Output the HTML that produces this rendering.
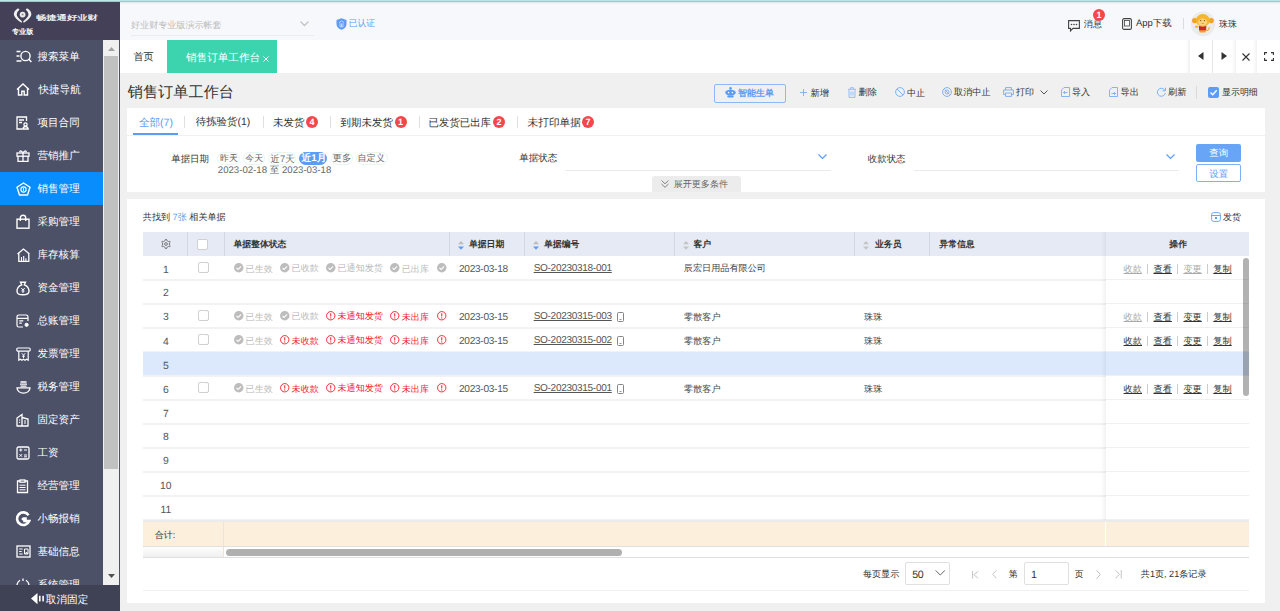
<!DOCTYPE html><html><head><meta charset="utf-8"><style>
*{margin:0;padding:0;box-sizing:border-box}
html,body{width:1280px;height:611px;overflow:hidden;background:#f0f0f0;font-family:"Liberation Sans",sans-serif;color:#333;text-rendering:geometricPrecision}
.a{position:absolute;white-space:nowrap;line-height:1}
svg{position:absolute;overflow:visible}
.b{position:absolute}
#topline{position:absolute;left:0;top:0;width:1280px;height:2px;background:linear-gradient(#b9e4e8 0,#b9e4e8 50%,#a3c6c8 50%)}
#side{position:absolute;left:0;top:0;width:120px;height:611px;background:#4d5168}
#logo{position:absolute;left:0;top:2px;width:120px;height:38px;background:#434057}
.mi{position:absolute;left:0;width:103px;height:33px}
.mi svg{left:16px;top:10px}
.mi.on{background:#098dfd}
#sscroll{position:absolute;left:103px;top:40px;width:16px;height:545px;background:#f0f0f0}
#sbottom{position:absolute;left:0;top:585px;width:120px;height:26px;background:#3f4254}
#header{position:absolute;left:120px;top:2px;width:1160px;height:38px;background:linear-gradient(rgba(0,0,0,0.07),rgba(0,0,0,0) 2.5px),#f7f8fc}
#tabbar{position:absolute;left:120px;top:40px;width:1160px;height:33px;background:#fff}
.card{position:absolute;background:#fff}
.badge{position:absolute;width:12px;height:12px;border-radius:6px;background:#f4474b;color:#fff;font-size:9px;font-weight:bold;text-align:center;line-height:12px}
.chip{position:absolute;top:151.5px;height:13px;border:1px solid #e8f5f1;border-radius:7px}
.th{position:absolute;top:232px;height:24px;background:#e6eaf5}
.hs{position:absolute;top:232px;width:1px;height:24px;background:#d3d7e0}
.row{position:absolute;left:143px;width:1106px;height:2px;background:#f2f2f2}
.cb{position:absolute;width:11px;height:11px;border:1px solid #d0d0d0;border-radius:2px;background:#fff}
.link{text-decoration:underline;text-underline-offset:1px}
</style></head><body>
<div id="side"></div><div id="logo"></div>
<svg style="left:10px;top:5px" width="26" height="21" viewBox="0 0 26 21"><path d="M7.6 3.6Q8.9 3.4 9.5 4.6Q6.6 7.2 6.7 9.6Q6.9 12.3 11.9 16.3Q12.2 17.2 11.4 17.7Q4.9 13.6 3.9 10Q3.4 6.6 7.6 3.6z" fill="#f0f0f0"/><path d="M17.6 3.6Q16.3 3.4 15.7 4.6Q18.6 7.2 18.5 9.6Q18.3 12.3 13.3 16.3Q13 17.2 13.8 17.7Q20.3 13.6 21.3 10Q21.8 6.6 17.6 3.6z" fill="#f0f0f0"/><circle cx="12.6" cy="9.6" r="2.9" fill="#ececec"/><circle cx="12.6" cy="9.6" r="1" fill="#8a8a95"/></svg>
<div class="a" style="left:35.9px;top:13.7px;font-size:10.35px;color:#eeeeee;font-weight:bold;transform:scaleY(0.68);transform-origin:0 50%">畅捷通好业财</div>
<div class="a" style="left:12.0px;top:29.0px;font-size:7.1px;color:#fff;font-weight:bold;">专业版</div>
<div class="mi" style="top:40px"><svg width="16" height="13" viewBox="0 0 16 13" fill="none" stroke="#fff" stroke-width="1.4"><path d="M0.5 1.5h4M0.5 6h3M0.5 11h5"/><circle cx="9.5" cy="6" r="4.6"/><path d="M12.8 9.3l2.6 2.8"/></svg></div>
<div class="a" style="left:37.5px;top:52.1px;font-size:10.55px;color:#fff;font-weight:400;">搜索菜单</div>
<div class="mi" style="top:73px"><svg width="14" height="13" viewBox="0 0 14 13" fill="none" stroke="#fff" stroke-width="1.4"><path d="M1 6.5L7 1l6 5.5M2.5 5.3V12h3.3V8.2h2.4V12h3.3V5.3"/></svg></div>
<div class="a" style="left:38.5px;top:85.1px;font-size:10.55px;color:#fff;font-weight:400;">快捷导航</div>
<div class="mi" style="top:106px"><svg width="13" height="14" viewBox="0 0 13 14" fill="none" stroke="#fff" stroke-width="1.3"><path d="M10.5 5V1H1v12h5"/><path d="M3 4h5M3 6.5h3"/><circle cx="9.5" cy="8.5" r="1.6"/><path d="M6.8 13c.4-1.6 1.5-2.5 2.7-2.5s2.3.9 2.7 2.5z"/></svg></div>
<div class="a" style="left:37.5px;top:118.1px;font-size:10.55px;color:#fff;font-weight:400;">项目合同</div>
<div class="mi" style="top:139px"><svg width="14" height="13" viewBox="0 0 14 13" fill="none" stroke="#fff" stroke-width="1.3"><rect x="1" y="4" width="12" height="3.2"/><path d="M2 7.2V12.3h10V7.2M7 4v8.3"/><path d="M7 4C5.5 1 3.2 1.5 4 3.2M7 4c1.5-3 3.8-2.5 3 -.8"/></svg></div>
<div class="a" style="left:37.5px;top:151.1px;font-size:10.55px;color:#fff;font-weight:400;">营销推广</div>
<div class="mi on" style="top:172px"><svg width="15" height="14" viewBox="0 0 15 14" fill="none" stroke="#fff" stroke-width="1.4"><path d="M7.5 1L14 5.2 11.5 13h-8L1 5.2z"/><circle cx="7.5" cy="7.5" r="2.6" stroke-width="1.1"/><path d="M7.5 6v3" stroke-width="0.9"/></svg></div>
<div class="a" style="left:37.5px;top:184.1px;font-size:10.55px;color:#fff;font-weight:400;">销售管理</div>
<div class="mi" style="top:205px"><svg width="14" height="14" viewBox="0 0 14 14" fill="none" stroke="#fff" stroke-width="1.4"><rect x="1" y="4.2" width="12" height="9"/><path d="M4.3 6V3a2.7 2.7 0 0 1 5.4 0v3"/></svg></div>
<div class="a" style="left:37.5px;top:217.1px;font-size:10.55px;color:#fff;font-weight:400;">采购管理</div>
<div class="mi" style="top:238px"><svg width="15" height="14" viewBox="0 0 15 14" fill="none" stroke="#fff" stroke-width="1.3"><path d="M1.5 6L7.5 1l6 5M2.8 5v8.3h10V5"/><path d="M5.5 13V9M7.7 13V8M9.9 13V10.3" stroke-width="1.1"/></svg></div>
<div class="a" style="left:37.5px;top:250.1px;font-size:10.55px;color:#fff;font-weight:400;">库存核算</div>
<div class="mi" style="top:271px"><svg width="14" height="15" viewBox="0 0 14 15" fill="none" stroke="#fff" stroke-width="1.4"><path d="M4.5 1.2h5L8.3 3.8c3 1 4.7 3.6 4.7 6.5 0 2.6-1.8 3.5-6 3.5s-6-.9-6-3.5c0-2.9 1.7-5.5 4.7-6.5z"/><path d="M5.3 7l1.7 2 1.7-2M7 9v3M5.5 10h3" stroke-width="1"/></svg></div>
<div class="a" style="left:37.5px;top:283.1px;font-size:10.55px;color:#fff;font-weight:400;">资金管理</div>
<div class="mi" style="top:304px"><svg width="14" height="14" viewBox="0 0 14 14" fill="none" stroke="#fff" stroke-width="1.2"><path d="M12 7V2.8A1.8 1.8 0 0 0 10.2 1H2.8A1.8 1.8 0 0 0 1 2.8v8.4A1.8 1.8 0 0 0 2.8 13H7"/><path d="M1 4.3h11M3.3 6.8h4M3.3 9.2h2.5"/><circle cx="10.6" cy="10.8" r="1.6" fill="#fff" stroke-width="1"/></svg></div>
<div class="a" style="left:37.5px;top:316.1px;font-size:10.55px;color:#fff;font-weight:400;">总账管理</div>
<div class="mi" style="top:337px"><svg width="15" height="14" viewBox="0 0 15 14" fill="none" stroke="#fff" stroke-width="1.2"><rect x="0.8" y="1" width="13.4" height="3.2" rx="1.2"/><path d="M2.8 4.2v9l1.6-1 1.5 1 1.6-1 1.5 1 1.6-1 1.6 1v-9"/><path d="M5.8 6.2l1.7 2 1.7-2M7.5 8.2v3M6 9.2h3" stroke-width="0.9"/></svg></div>
<div class="a" style="left:37.5px;top:349.1px;font-size:10.55px;color:#fff;font-weight:400;">发票管理</div>
<div class="mi" style="top:370px"><svg width="15" height="14" viewBox="0 0 15 14" fill="none" stroke="#fff" stroke-width="1.3"><path d="M1 7.8h13c0 3-2.8 5.4-6.5 5.4S1 10.8 1 7.8z"/><path d="M4.5 2h6M4 4.2h7M4.5 6.2h6" stroke-width="1.3"/></svg></div>
<div class="a" style="left:37.5px;top:382.1px;font-size:10.55px;color:#fff;font-weight:400;">税务管理</div>
<div class="mi" style="top:403px"><svg width="13" height="14" viewBox="0 0 13 14" fill="none" stroke="#fff" stroke-width="1.3"><path d="M1 13V5l5-3.5V13M6 4.5l6 1.5v7M0.5 13h12"/><path d="M3 7h1.2M3 9.3h1.2M8 8h2M8 10h2" stroke-width="1"/></svg></div>
<div class="a" style="left:37.5px;top:415.1px;font-size:10.55px;color:#fff;font-weight:400;">固定资产</div>
<div class="mi" style="top:436px"><svg width="14" height="14" viewBox="0 0 14 14" fill="none" stroke="#fff" stroke-width="1.3"><rect x="1" y="1" width="12" height="12" rx="1.5"/><path d="M3.3 4h3M4.8 2.5v3M8 4h3M3.5 8.2l2.5 2.5M6 8.2l-2.5 2.5M8 9h3M8 10.8h3" stroke-width="1"/></svg></div>
<div class="a" style="left:37.5px;top:448.1px;font-size:10.55px;color:#fff;font-weight:400;">工资</div>
<div class="mi" style="top:469px"><svg width="13" height="14" viewBox="0 0 13 14" fill="none" stroke="#fff" stroke-width="1.3"><path d="M4 2H1.5v11.5h10V2H9"/><rect x="4" y="1" width="5" height="2.2"/><path d="M3.5 6.2h6M3.5 8.5h6M3.5 10.8h6" stroke-width="1"/></svg></div>
<div class="a" style="left:37.5px;top:481.1px;font-size:10.55px;color:#fff;font-weight:400;">经营管理</div>
<div class="mi" style="top:502px"><svg width="14" height="14" viewBox="0 0 14 14"><path d="M12.6 3.2A6.3 6.3 0 1 0 13.2 9H8.5V6.5h2.3" fill="none" stroke="#fff" stroke-width="2.6"/><circle cx="7" cy="7" r="1.5" fill="#fff"/></svg></div>
<div class="a" style="left:37.5px;top:514.1px;font-size:10.55px;color:#fff;font-weight:400;">小畅报销</div>
<div class="mi" style="top:535px"><svg width="15" height="13" viewBox="0 0 15 13" fill="none" stroke="#fff" stroke-width="1.3"><rect x="1" y="1" width="13" height="11"/><path d="M3.2 4h3.5M3.2 6.5h2.5M3.2 9h3.5M8.5 4h3.5v5H8.5zM9.5 9l1-2 1 2" stroke-width="1"/></svg></div>
<div class="a" style="left:37.5px;top:547.1px;font-size:10.55px;color:#fff;font-weight:400;">基础信息</div>
<div class="mi" style="top:568px"><svg width="14" height="14" viewBox="0 0 14 14" fill="none" stroke="#fff" stroke-width="1.3"><path d="M4 2.2A6 6 0 1 0 10 2.2"/><path d="M7 0.5v2.5"/></svg></div>
<div class="a" style="left:37.5px;top:580.1px;font-size:10.55px;color:#fff;font-weight:400;">系统管理</div>
<div id="sscroll"><svg style="left:4.5px;top:6.5px" width="7" height="4" viewBox="0 0 7 4"><path d="M0 4L3.5 0 7 4z" fill="#a3a3a3"/></svg><div style="position:absolute;left:1px;top:16px;width:14px;height:413px;background:#c1c1c1"></div><svg style="left:4.5px;top:534px" width="7" height="4" viewBox="0 0 7 4"><path d="M0 0L3.5 4 7 0z" fill="#505050"/></svg></div>
<div id="sbottom"><svg style="left:31.3px;top:7.8px" width="14" height="12" viewBox="0 0 14 12"><path d="M0 5.6L6.5 0v11.2z" fill="#fff"/><rect x="8" y="2.8" width="1.6" height="5.6" fill="#fff"/><rect x="11.3" y="2.8" width="1.6" height="5.6" fill="#fff"/></svg></div>
<div class="a" style="left:45.8px;top:594.5px;font-size:10.65px;color:#fff;font-weight:400;">取消固定</div>
<div id="topline"></div>
<div id="header"></div>
<div class="a" style="left:131.0px;top:21.0px;font-size:9.07px;color:#bcbcbc;font-weight:400;">好业财专业版演示帐套</div>
<div class="b" style="left:131px;top:35px;width:183px;height:1px;background:#ebecf0"></div>
<svg style="left:300px;top:20.5px" width="9" height="5" viewBox="0 0 9 5"><path d="M0.5 0.5L4.5 4.5 8.5 0.5" fill="none" stroke="#c4c4c4" stroke-width="1.25"/></svg>
<svg style="left:336px;top:17.5px" width="11" height="12" viewBox="0 0 11 12"><path d="M5.5 0.3L10.5 2v4c0 3-2.3 5-5 5.8C2.8 11 0.5 9 0.5 6V2z" fill="#5c9cf5"/><path d="M3 4.6L5.5 3 8 4.6M4 5.2v3.6h3V5.2M5.5 5.5v3" stroke="#d6e6ff" stroke-width="0.8" fill="none"/></svg>
<div class="a" style="left:348.7px;top:19.4px;font-size:8.77px;color:#5c9cf5;font-weight:500;">已认证</div>
<svg style="left:1068px;top:19.5px" width="12" height="12" viewBox="0 0 12 12"><path d="M0.6 0.6h10.8v7.8H5L2.5 11V8.4H0.6z" fill="none" stroke="#444" stroke-width="1.1"/><circle cx="3.5" cy="4.5" r="0.8" fill="#444"/><circle cx="6" cy="4.5" r="0.8" fill="#444"/><circle cx="8.5" cy="4.5" r="0.8" fill="#444"/></svg>
<div class="a" style="left:1083.8px;top:20.3px;font-size:9.1px;color:#333;font-weight:400;">消息</div>
<div class="badge" style="left:1093px;top:9.3px">1</div>
<svg style="left:1122px;top:18px" width="10" height="12" viewBox="0 0 10 12"><rect x="0.6" y="0.6" width="8.8" height="10.8" rx="1.5" fill="none" stroke="#444" stroke-width="1.1"/><rect x="2.5" y="2.5" width="5" height="5.5" fill="none" stroke="#444" stroke-width="0.8"/></svg>
<div class="a" style="left:1136.0px;top:18.4px;font-size:9.42px;color:#333;font-weight:400;">App下载</div>
<div class="b" style="left:1183px;top:18px;width:1px;height:11px;background:#dcdcdc"></div>
<svg style="left:1188px;top:10px" width="30" height="28" viewBox="0 0 30 28"><circle cx="15.1" cy="13.7" r="12.3" fill="#ebebeb"/><path d="M18 20.5c2.5 0 3.5-1.5 3-3.5" stroke="#f3a62a" stroke-width="1.2" fill="none"/><rect x="11.3" y="19.5" width="6.4" height="3" rx="1" fill="#f0a030"/><path d="M10.8 16h7.6l-.3 4.2h-7z" fill="#c42a36"/><ellipse cx="8.5" cy="16.7" rx="1.6" ry="1.3" fill="#f6b62e"/><circle cx="6.6" cy="10.6" r="2.6" fill="#f3a222"/><circle cx="23.2" cy="10.6" r="2.6" fill="#f3a222"/><ellipse cx="14.8" cy="10.4" rx="7" ry="6.3" fill="#f7b52c"/><ellipse cx="14.6" cy="12.2" rx="4.6" ry="3.6" fill="#fbd27c"/><circle cx="12.7" cy="10.6" r="0.65" fill="#7a4a20"/><circle cx="16.4" cy="10.6" r="0.65" fill="#7a4a20"/><path d="M13.6 13.5h2" stroke="#c77a2a" stroke-width="0.7"/></svg>
<div class="a" style="left:1219.0px;top:19.9px;font-size:9.0px;color:#333;font-weight:400;">珠珠</div>
<div id="tabbar"></div>
<div class="a" style="left:133.5px;top:53.0px;font-size:10.12px;color:#333;font-weight:400;">首页</div>
<div class="b" style="left:167px;top:40px;width:110px;height:33px;background:#3cd4ae"></div>
<div class="a" style="left:186.0px;top:52.5px;font-size:10.58px;color:#fff;font-weight:400;">销售订单工作台</div>
<svg style="left:263px;top:55.5px" width="6" height="6" viewBox="0 0 6 6"><path d="M0.5 0.5l5 5M5.5 0.5l-5 5" stroke="#fff" stroke-width="1"/></svg>
<div class="b" style="left:1186px;top:40px;width:4px;height:33px;background:linear-gradient(to right,rgba(0,0,0,0),rgba(0,0,0,0.06))"></div>
<div class="b" style="left:1212px;top:40px;width:1px;height:33px;background:#e6e6e6"></div>
<div class="b" style="left:1232px;top:40px;width:4px;height:33px;background:linear-gradient(to right,rgba(0,0,0,0),rgba(0,0,0,0.05))"></div>
<div class="b" style="left:1253px;top:40px;width:4px;height:33px;background:linear-gradient(to right,rgba(0,0,0,0),rgba(0,0,0,0.05))"></div>
<svg style="left:1198px;top:51.5px" width="6" height="8" viewBox="0 0 6 8"><path d="M5.5 0L0 4l5.5 4z" fill="#333"/></svg>
<svg style="left:1221px;top:51.5px" width="6" height="8" viewBox="0 0 6 8"><path d="M0.5 0L6 4 0.5 8z" fill="#333"/></svg>
<svg style="left:1242px;top:52.5px" width="8" height="8" viewBox="0 0 8 8"><path d="M0.5 0.5l7 7M7.5 0.5l-7 7" stroke="#333" stroke-width="1.1"/></svg>
<svg style="left:1264px;top:52px" width="10" height="9" viewBox="0 0 10 9"><path d="M0.6 3V0.6H3M7 0.6h2.4V3M9.4 6v2.4H7M3 8.4H0.6V6" fill="none" stroke="#333" stroke-width="1.1"/></svg>
<div class="a" style="left:127.7px;top:84.9px;font-size:15.19px;color:#333;font-weight:400;">销售订单工作台</div>
<div class="b" style="left:714px;top:83.5px;width:72px;height:19px;border:1px solid #8db8f7;border-radius:2px"></div>
<svg style="left:724.5px;top:86.5px" width="11" height="11" viewBox="0 0 11 11"><circle cx="5.5" cy="1.4" r="1.3" fill="#5c9cf5"/><ellipse cx="5.5" cy="5.6" rx="5.3" ry="2.9" fill="#5c9cf5"/><circle cx="3.6" cy="5.6" r="0.8" fill="#fff"/><circle cx="7.4" cy="5.6" r="0.8" fill="#fff"/><rect x="2.3" y="8.6" width="6.4" height="2" rx="0.8" fill="#5c9cf5"/></svg>
<div class="a" style="left:738.0px;top:88.5px;font-size:9.0px;color:#5c9cf5;font-weight:bold;">智能生单</div>
<svg style="left:800px;top:88.5px" width="7" height="7" viewBox="0 0 7 7"><path d="M3.5 0v7M0 3.5h7" stroke="#78adf8" stroke-width="0.9"/></svg>
<div class="a" style="left:810.5px;top:88.8px;font-size:9.25px;color:#333;font-weight:400;">新增</div>
<svg style="left:847.5px;top:86.5px" width="8" height="11" viewBox="0 0 8 11"><path d="M0 2.3h8M2.6 2.3V0.7h2.8v1.6M1 2.8v7.6h6V2.8M3 4.5v4M5 4.5v4" fill="none" stroke="#7fb1f8" stroke-width="0.8"/></svg>
<div class="a" style="left:858.6px;top:88.3px;font-size:9.2px;color:#333;font-weight:400;">删除</div>
<svg style="left:894.5px;top:87px" width="10" height="10" viewBox="0 0 10 10"><circle cx="5" cy="5" r="4.4" fill="none" stroke="#74a9f7" stroke-width="0.9"/><path d="M2 2l6 6" stroke="#74a9f7" stroke-width="0.9"/></svg>
<div class="a" style="left:907.0px;top:88.8px;font-size:9.0px;color:#333;font-weight:400;">中止</div>
<svg style="left:942px;top:87px" width="10" height="10" viewBox="0 0 10 10"><circle cx="5" cy="5" r="4.4" fill="none" stroke="#74a9f7" stroke-width="0.9"/><circle cx="5" cy="5" r="2" fill="none" stroke="#74a9f7" stroke-width="0.85"/><path d="M2.5 2.5l5 5" stroke="#74a9f7" stroke-width="0.85"/></svg>
<div class="a" style="left:954.0px;top:88.3px;font-size:9.15px;color:#333;font-weight:400;">取消中止</div>
<svg style="left:1003px;top:87px" width="11" height="10" viewBox="0 0 11 10"><path d="M2.5 3V0.6h6V3M2.5 7.5H0.6V3h9.8v4.5H8.5M2.5 6h6v3.4h-6z" fill="none" stroke="#74a9f7" stroke-width="0.9"/></svg>
<div class="a" style="left:1016.0px;top:88.3px;font-size:9.0px;color:#333;font-weight:400;">打印</div>
<svg style="left:1040px;top:90px" width="8" height="5" viewBox="0 0 8 5"><path d="M0.5 0.5L4 4 7.5 0.5" fill="none" stroke="#555" stroke-width="1"/></svg>
<svg style="left:1061px;top:87px" width="9" height="10" viewBox="0 0 9 10"><path d="M3 0.5h5.5v9h-8V3z" fill="none" stroke="#74a9f7" stroke-width="0.85"/><path d="M6.5 5.5h-4M4 4l-1.5 1.5L4 7" fill="none" stroke="#74a9f7" stroke-width="0.85"/></svg>
<div class="a" style="left:1072.0px;top:88.3px;font-size:9.0px;color:#333;font-weight:400;">导入</div>
<svg style="left:1108.5px;top:87px" width="9" height="10" viewBox="0 0 9 10"><path d="M3 0.5h5.5v9h-8V3z" fill="none" stroke="#74a9f7" stroke-width="0.85"/><path d="M2.5 6.5h4M5 5l1.5 1.5L5 8" fill="none" stroke="#74a9f7" stroke-width="0.85"/></svg>
<div class="a" style="left:1120.4px;top:88.3px;font-size:9.26px;color:#333;font-weight:400;">导出</div>
<svg style="left:1157px;top:87px" width="9" height="10" viewBox="0 0 9 10"><path d="M7.8 3.2A4 4 0 1 0 8.3 6" fill="none" stroke="#74a9f7" stroke-width="0.9"/><path d="M8.5 0.8v3H5.5" fill="none" stroke="#74a9f7" stroke-width="0.9"/></svg>
<div class="a" style="left:1168.0px;top:88.3px;font-size:9.25px;color:#333;font-weight:400;">刷新</div>
<div class="b" style="left:1195.5px;top:86px;width:1px;height:13px;background:#dadada"></div>
<svg style="left:1208px;top:87px" width="11" height="11" viewBox="0 0 11 11"><rect x="0" y="0" width="11" height="11" rx="2" fill="#5c9cf5"/><path d="M2.5 5.5l2.2 2.2L8.7 3.3" fill="none" stroke="#fff" stroke-width="1.3"/></svg>
<div class="a" style="left:1222.0px;top:87.8px;font-size:8.95px;color:#333;font-weight:400;">显示明细</div>
<div class="card" style="left:127px;top:108px;width:1138px;height:84px"></div>
<div class="b" style="left:127px;top:134.5px;width:1138px;height:1px;background:#f0f0f0"></div>
<div class="a" style="left:139.0px;top:117.7px;font-size:10.56px;color:#5c9cf5;font-weight:400;">全部(7)</div>
<div class="b" style="left:133px;top:133px;width:45px;height:2px;background:#5c9cf5"></div>
<div class="b" style="left:184.3px;top:116px;width:1px;height:12px;background:#e0e0e0"></div>
<div class="b" style="left:262.5px;top:116px;width:1px;height:12px;background:#e0e0e0"></div>
<div class="b" style="left:329.5px;top:116px;width:1px;height:12px;background:#e0e0e0"></div>
<div class="b" style="left:418.6px;top:116px;width:1px;height:12px;background:#e0e0e0"></div>
<div class="b" style="left:517px;top:116px;width:1px;height:12px;background:#e0e0e0"></div>
<div class="a" style="left:195.8px;top:118.2px;font-size:10.42px;color:#333;font-weight:400;">待拣验货(1)</div>
<div class="a" style="left:273.0px;top:117.7px;font-size:10.53px;color:#333;font-weight:400;">未发货</div>
<div class="badge" style="left:306px;top:116px">4</div>
<div class="a" style="left:340.6px;top:118.7px;font-size:10.48px;color:#333;font-weight:400;">到期未发货</div>
<div class="badge" style="left:394.5px;top:116px">1</div>
<div class="a" style="left:428.6px;top:118.7px;font-size:10.4px;color:#333;font-weight:400;">已发货已出库</div>
<div class="badge" style="left:493px;top:116px">2</div>
<div class="a" style="left:527.5px;top:117.7px;font-size:10.7px;color:#333;font-weight:400;">未打印单据</div>
<div class="badge" style="left:582px;top:116px">7</div>
<div class="a" style="left:171.3px;top:153.5px;font-size:9.42px;color:#333;font-weight:400;">单据日期</div>
<div class="chip" style="left:217px;width:23px"></div>
<div class="a" style="left:220.0px;top:154.2px;font-size:8.9px;color:#666;font-weight:400;">昨天</div>
<div class="chip" style="left:243px;width:21.5px"></div>
<div class="a" style="left:245.3px;top:154.2px;font-size:8.85px;color:#666;font-weight:400;">今天</div>
<div class="chip" style="left:268px;width:28px"></div>
<div class="a" style="left:270.6px;top:154.7px;font-size:9.36px;color:#666;font-weight:400;">近7天</div>
<div class="chip" style="left:299px;width:28px;background:#5c9cf5;border-color:#5c9cf5"></div>
<div class="a" style="left:301.6px;top:154.2px;font-size:9.75px;color:#fff;font-weight:bold;">近1月</div>
<div class="chip" style="left:331px;width:22px"></div>
<div class="a" style="left:332.5px;top:153.2px;font-size:9.42px;color:#666;font-weight:400;">更多</div>
<div class="chip" style="left:355.5px;width:32px"></div>
<div class="a" style="left:357.4px;top:154.2px;font-size:9.17px;color:#666;font-weight:400;">自定义</div>
<div class="a" style="left:217.8px;top:166.0px;font-size:9.64px;color:#666;font-weight:400;">2023-02-18 至 2023-03-18</div>
<div class="a" style="left:519.3px;top:154.4px;font-size:9.5px;color:#333;font-weight:400;">单据状态</div>
<div class="b" style="left:565px;top:169.5px;width:266px;height:1px;background:#ebebeb"></div>
<svg style="left:817.5px;top:154px" width="9" height="5" viewBox="0 0 9 5"><path d="M0.5 0.5L4.5 4.5 8.5 0.5" fill="none" stroke="#5c9cf5" stroke-width="1.2"/></svg>
<div class="a" style="left:867.8px;top:154.75px;font-size:9.45px;color:#333;font-weight:400;">收款状态</div>
<div class="b" style="left:914px;top:169.5px;width:265px;height:1px;background:#ebebeb"></div>
<svg style="left:1166px;top:154px" width="9" height="5" viewBox="0 0 9 5"><path d="M0.5 0.5L4.5 4.5 8.5 0.5" fill="none" stroke="#5c9cf5" stroke-width="1.2"/></svg>
<div class="b" style="left:1196px;top:143.5px;width:45px;height:18px;background:#69a5f7;border-radius:2px"></div>
<div class="a" style="left:1209.3px;top:149.2px;font-size:9.45px;color:#fff;font-weight:400;">查询</div>
<div class="b" style="left:1196px;top:164px;width:45px;height:18px;border:1px solid #7fb0f7;border-radius:2px;background:#fff"></div>
<div class="a" style="left:1209.3px;top:170.0px;font-size:9.45px;color:#5c9cf5;font-weight:400;">设置</div>
<div class="b" style="left:651.5px;top:176px;width:89.5px;height:16px;background:#ececec;border-radius:3px 3px 0 0"></div>
<svg style="left:661px;top:179.8px" width="8" height="8" viewBox="0 0 8 8"><path d="M0.5 0.5L4 3.8 7.5 0.5M0.5 4L4 7.3 7.5 4" fill="none" stroke="#777" stroke-width="0.9"/></svg>
<div class="a" style="left:673.7px;top:179.5px;font-size:9.05px;color:#666;font-weight:400;">展开更多条件</div>
<div class="card" style="left:127px;top:199px;width:1138px;height:404px"></div>
<div class="a" style="left:142.8px;top:213.2px;font-size:9.1px;color:#333;font-weight:400;">共找到 <span style="color:#5c9cf5">7张</span> 相关单据</div>
<svg style="left:1211px;top:212px" width="10" height="10" viewBox="0 0 10 10"><rect x="0.6" y="0.6" width="8.8" height="8.8" rx="2" fill="none" stroke="#5c9cf5" stroke-width="0.9"/><path d="M0.6 3.5h8.8" stroke="#5c9cf5" stroke-width="0.9"/><rect x="4" y="5" width="2" height="2" fill="#5c9cf5"/></svg>
<div class="a" style="left:1223.0px;top:212.7px;font-size:9.0px;color:#333;font-weight:400;">发货</div>
<div class="th" style="left:143px;width:1106px"></div>
<div class="hs" style="left:187.3px"></div>
<div class="hs" style="left:223.5px"></div>
<div class="hs" style="left:448.7px"></div>
<div class="hs" style="left:523.6px"></div>
<div class="hs" style="left:673.7px"></div>
<div class="hs" style="left:853.5px"></div>
<div class="hs" style="left:929px"></div>
<svg style="left:160.6px;top:239.2px" width="10" height="10" viewBox="0 0 10 10"><path d="M4.25 1.48 L4.42 0.44 L5.58 0.44 L5.75 1.48 L7.68 2.59 L8.66 2.22 L9.24 3.22 L8.42 3.89 L8.42 6.11 L9.24 6.78 L8.66 7.78 L7.68 7.41 L5.75 8.52 L5.58 9.56 L4.42 9.56 L4.25 8.52 L2.32 7.41 L1.34 7.78 L0.76 6.78 L1.58 6.11 L1.58 3.89 L0.76 3.22 L1.34 2.22 L2.32 2.59z" fill="none" stroke="#6a6a6a" stroke-width="0.9" stroke-linejoin="round"/><circle cx="5" cy="5" r="1.4" fill="none" stroke="#6a6a6a" stroke-width="0.9"/></svg>
<div class="cb" style="left:196.5px;top:238.8px"></div>
<div class="a" style="left:233.4px;top:240.2px;font-size:8.84px;color:#333;font-weight:bold;">单据整体状态</div>
<svg style="left:458px;top:241px" width="6" height="9" viewBox="0 0 6 9"><path d="M0 3.2L3 0 6 3.2z" fill="#bdbdbd"/><path d="M0 5.5L3 8.7 6 5.5z" fill="#5c9cf5"/></svg>
<div class="a" style="left:468.9px;top:240.2px;font-size:8.84px;color:#333;font-weight:bold;">单据日期</div>
<svg style="left:533px;top:241px" width="6" height="9" viewBox="0 0 6 9"><path d="M0 3.2L3 0 6 3.2z" fill="#bdbdbd"/><path d="M0 5.5L3 8.7 6 5.5z" fill="#5c9cf5"/></svg>
<div class="a" style="left:544.0px;top:240.2px;font-size:8.84px;color:#333;font-weight:bold;">单据编号</div>
<svg style="left:683px;top:241px" width="6" height="9" viewBox="0 0 6 9"><path d="M0 3.2L3 0 6 3.2z" fill="#c4c4c4"/><path d="M0 5.5L3 8.7 6 5.5z" fill="#c4c4c4"/></svg>
<div class="a" style="left:693.4px;top:240.2px;font-size:8.84px;color:#333;font-weight:bold;">客户</div>
<svg style="left:863px;top:241px" width="6" height="9" viewBox="0 0 6 9"><path d="M0 3.2L3 0 6 3.2z" fill="#c4c4c4"/><path d="M0 5.5L3 8.7 6 5.5z" fill="#c4c4c4"/></svg>
<div class="a" style="left:875.0px;top:240.2px;font-size:8.84px;color:#333;font-weight:bold;">业务员</div>
<div class="a" style="left:939.3px;top:240.2px;font-size:8.84px;color:#333;font-weight:bold;">异常信息</div>
<div class="row" style="top:279px"></div>
<div class="a" style="left:163.0px;top:265.6px;font-size:10.4px;color:#555;font-weight:400;">1</div>
<div class="row" style="top:303px"></div>
<div class="a" style="left:163.0px;top:289.1px;font-size:10.4px;color:#555;font-weight:400;">2</div>
<div class="row" style="top:327px"></div>
<div class="a" style="left:163.0px;top:313.1px;font-size:10.4px;color:#555;font-weight:400;">3</div>
<div class="row" style="top:351px"></div>
<div class="a" style="left:163.0px;top:337.6px;font-size:10.4px;color:#555;font-weight:400;">4</div>
<div class="b" style="left:143px;top:352px;width:1106px;height:24px;background:#dce8fc"></div>
<div class="row" style="top:375px"></div>
<div class="a" style="left:163.0px;top:361.6px;font-size:10.4px;color:#555;font-weight:400;">5</div>
<div class="row" style="top:399px"></div>
<div class="a" style="left:163.0px;top:385.6px;font-size:10.4px;color:#555;font-weight:400;">6</div>
<div class="row" style="top:423px"></div>
<div class="a" style="left:163.0px;top:409.6px;font-size:10.4px;color:#555;font-weight:400;">7</div>
<div class="row" style="top:447px"></div>
<div class="a" style="left:163.0px;top:433.1px;font-size:10.4px;color:#555;font-weight:400;">8</div>
<div class="row" style="top:471px"></div>
<div class="a" style="left:163.0px;top:457.1px;font-size:10.4px;color:#555;font-weight:400;">9</div>
<div class="row" style="top:495px"></div>
<div class="a" style="left:160.0px;top:481.6px;font-size:10.4px;color:#555;font-weight:400;">10</div>
<div class="row" style="top:519px"></div>
<div class="a" style="left:160.5px;top:505.6px;font-size:10.4px;color:#555;font-weight:400;">11</div>
<div class="cb" style="left:197.5px;top:261.5px"></div>
<svg style="left:233.8px;top:263.4px" width="9.5" height="9.5" viewBox="0 0 10 10"><circle cx="5" cy="5" r="5" fill="#bdbdbd"/><path d="M2.6 5.1l1.7 1.7 3.2-3.2" fill="none" stroke="#fff" stroke-width="1.1"/></svg>
<div class="a" style="left:245.6px;top:264.9px;font-size:9.07px;color:#bbb;font-weight:400;">已生效</div>
<svg style="left:280px;top:263.4px" width="9.5" height="9.5" viewBox="0 0 10 10"><circle cx="5" cy="5" r="5" fill="#bdbdbd"/><path d="M2.6 5.1l1.7 1.7 3.2-3.2" fill="none" stroke="#fff" stroke-width="1.1"/></svg>
<div class="a" style="left:291.6px;top:264.4px;font-size:9.07px;color:#bbb;font-weight:400;">已收款</div>
<svg style="left:326.3px;top:263.4px" width="9.5" height="9.5" viewBox="0 0 10 10"><circle cx="5" cy="5" r="5" fill="#bdbdbd"/><path d="M2.6 5.1l1.7 1.7 3.2-3.2" fill="none" stroke="#fff" stroke-width="1.1"/></svg>
<div class="a" style="left:337.5px;top:264.4px;font-size:9.07px;color:#bbb;font-weight:400;">已通知发货</div>
<svg style="left:390px;top:263.4px" width="9.5" height="9.5" viewBox="0 0 10 10"><circle cx="5" cy="5" r="5" fill="#bdbdbd"/><path d="M2.6 5.1l1.7 1.7 3.2-3.2" fill="none" stroke="#fff" stroke-width="1.1"/></svg>
<div class="a" style="left:401.8px;top:264.9px;font-size:9.07px;color:#bbb;font-weight:400;">已出库</div>
<svg style="left:436.5px;top:263.4px" width="9.5" height="9.5" viewBox="0 0 10 10"><circle cx="5" cy="5" r="5" fill="#bdbdbd"/><path d="M2.6 5.1l1.7 1.7 3.2-3.2" fill="none" stroke="#fff" stroke-width="1.1"/></svg>
<div class="a" style="left:459.0px;top:265.1px;font-size:10.15px;color:#555;font-weight:400;letter-spacing:-0.3px;">2023-03-18</div>
<div class="a" style="left:533.7px;top:264.1px;font-size:10.04px;color:#555;font-weight:400;letter-spacing:-0.3px;text-decoration:underline;text-underline-offset:0.5px">SO-20230318-001</div>
<div class="a" style="left:683.75px;top:264.4px;font-size:9.13px;color:#444;font-weight:400;">辰宏日用品有限公司</div>
<div class="cb" style="left:197.5px;top:309.5px"></div>
<svg style="left:233.8px;top:311.4px" width="9.5" height="9.5" viewBox="0 0 10 10"><circle cx="5" cy="5" r="5" fill="#bdbdbd"/><path d="M2.6 5.1l1.7 1.7 3.2-3.2" fill="none" stroke="#fff" stroke-width="1.1"/></svg>
<div class="a" style="left:245.6px;top:312.9px;font-size:9.07px;color:#bbb;font-weight:400;">已生效</div>
<svg style="left:280px;top:311.4px" width="9.5" height="9.5" viewBox="0 0 10 10"><circle cx="5" cy="5" r="5" fill="#bdbdbd"/><path d="M2.6 5.1l1.7 1.7 3.2-3.2" fill="none" stroke="#fff" stroke-width="1.1"/></svg>
<div class="a" style="left:291.6px;top:312.4px;font-size:9.07px;color:#bbb;font-weight:400;">已收款</div>
<svg style="left:326.3px;top:311.4px" width="9.5" height="9.5" viewBox="0 0 10 10"><circle cx="5" cy="5" r="4.4" fill="none" stroke="#f5222d" stroke-width="1"/><path d="M5 2.4v3.3" stroke="#f5222d" stroke-width="1.1"/><circle cx="5" cy="7.3" r="0.65" fill="#f5222d"/></svg>
<div class="a" style="left:337.5px;top:312.4px;font-size:9.07px;color:#f5222d;font-weight:400;">未通知发货</div>
<svg style="left:390px;top:311.4px" width="9.5" height="9.5" viewBox="0 0 10 10"><circle cx="5" cy="5" r="4.4" fill="none" stroke="#f5222d" stroke-width="1"/><path d="M5 2.4v3.3" stroke="#f5222d" stroke-width="1.1"/><circle cx="5" cy="7.3" r="0.65" fill="#f5222d"/></svg>
<div class="a" style="left:401.8px;top:312.9px;font-size:9.07px;color:#f5222d;font-weight:400;">未出库</div>
<svg style="left:436.5px;top:311.4px" width="9.5" height="9.5" viewBox="0 0 10 10"><circle cx="5" cy="5" r="4.4" fill="none" stroke="#f5222d" stroke-width="1"/><path d="M5 2.4v3.3" stroke="#f5222d" stroke-width="1.1"/><circle cx="5" cy="7.3" r="0.65" fill="#f5222d"/></svg>
<div class="a" style="left:459.0px;top:313.1px;font-size:10.15px;color:#555;font-weight:400;letter-spacing:-0.3px;">2023-03-15</div>
<div class="a" style="left:533.7px;top:312.1px;font-size:10.04px;color:#555;font-weight:400;letter-spacing:-0.3px;text-decoration:underline;text-underline-offset:0.5px">SO-20230315-003</div>
<div class="a" style="left:684.0px;top:312.9px;font-size:9.13px;color:#444;font-weight:400;">零散客户</div>
<svg style="left:617px;top:311.5px" width="7" height="10" viewBox="0 0 7 10"><rect x="0.5" y="0.5" width="6" height="9" rx="1" fill="none" stroke="#777" stroke-width="0.9"/><path d="M2.5 7.5h2" stroke="#777" stroke-width="0.8"/></svg>
<div class="a" style="left:864.0px;top:312.9px;font-size:9.13px;color:#444;font-weight:400;">珠珠</div>
<div class="cb" style="left:197.5px;top:333.5px"></div>
<svg style="left:233.8px;top:335.4px" width="9.5" height="9.5" viewBox="0 0 10 10"><circle cx="5" cy="5" r="5" fill="#bdbdbd"/><path d="M2.6 5.1l1.7 1.7 3.2-3.2" fill="none" stroke="#fff" stroke-width="1.1"/></svg>
<div class="a" style="left:245.6px;top:336.9px;font-size:9.07px;color:#bbb;font-weight:400;">已生效</div>
<svg style="left:280px;top:335.4px" width="9.5" height="9.5" viewBox="0 0 10 10"><circle cx="5" cy="5" r="4.4" fill="none" stroke="#f5222d" stroke-width="1"/><path d="M5 2.4v3.3" stroke="#f5222d" stroke-width="1.1"/><circle cx="5" cy="7.3" r="0.65" fill="#f5222d"/></svg>
<div class="a" style="left:291.6px;top:336.9px;font-size:9.07px;color:#f5222d;font-weight:400;">未收款</div>
<svg style="left:326.3px;top:335.4px" width="9.5" height="9.5" viewBox="0 0 10 10"><circle cx="5" cy="5" r="4.4" fill="none" stroke="#f5222d" stroke-width="1"/><path d="M5 2.4v3.3" stroke="#f5222d" stroke-width="1.1"/><circle cx="5" cy="7.3" r="0.65" fill="#f5222d"/></svg>
<div class="a" style="left:337.5px;top:336.4px;font-size:9.07px;color:#f5222d;font-weight:400;">未通知发货</div>
<svg style="left:390px;top:335.4px" width="9.5" height="9.5" viewBox="0 0 10 10"><circle cx="5" cy="5" r="4.4" fill="none" stroke="#f5222d" stroke-width="1"/><path d="M5 2.4v3.3" stroke="#f5222d" stroke-width="1.1"/><circle cx="5" cy="7.3" r="0.65" fill="#f5222d"/></svg>
<div class="a" style="left:401.8px;top:336.9px;font-size:9.07px;color:#f5222d;font-weight:400;">未出库</div>
<svg style="left:436.5px;top:335.4px" width="9.5" height="9.5" viewBox="0 0 10 10"><circle cx="5" cy="5" r="4.4" fill="none" stroke="#f5222d" stroke-width="1"/><path d="M5 2.4v3.3" stroke="#f5222d" stroke-width="1.1"/><circle cx="5" cy="7.3" r="0.65" fill="#f5222d"/></svg>
<div class="a" style="left:459.0px;top:337.1px;font-size:10.15px;color:#555;font-weight:400;letter-spacing:-0.3px;">2023-03-15</div>
<div class="a" style="left:533.7px;top:336.1px;font-size:10.04px;color:#555;font-weight:400;letter-spacing:-0.3px;text-decoration:underline;text-underline-offset:0.5px">SO-20230315-002</div>
<div class="a" style="left:684.0px;top:336.9px;font-size:9.13px;color:#444;font-weight:400;">零散客户</div>
<svg style="left:617px;top:335.5px" width="7" height="10" viewBox="0 0 7 10"><rect x="0.5" y="0.5" width="6" height="9" rx="1" fill="none" stroke="#777" stroke-width="0.9"/><path d="M2.5 7.5h2" stroke="#777" stroke-width="0.8"/></svg>
<div class="a" style="left:864.0px;top:336.9px;font-size:9.13px;color:#444;font-weight:400;">珠珠</div>
<div class="cb" style="left:197.5px;top:381.5px"></div>
<svg style="left:233.8px;top:383.4px" width="9.5" height="9.5" viewBox="0 0 10 10"><circle cx="5" cy="5" r="5" fill="#bdbdbd"/><path d="M2.6 5.1l1.7 1.7 3.2-3.2" fill="none" stroke="#fff" stroke-width="1.1"/></svg>
<div class="a" style="left:245.6px;top:384.9px;font-size:9.07px;color:#bbb;font-weight:400;">已生效</div>
<svg style="left:280px;top:383.4px" width="9.5" height="9.5" viewBox="0 0 10 10"><circle cx="5" cy="5" r="4.4" fill="none" stroke="#f5222d" stroke-width="1"/><path d="M5 2.4v3.3" stroke="#f5222d" stroke-width="1.1"/><circle cx="5" cy="7.3" r="0.65" fill="#f5222d"/></svg>
<div class="a" style="left:291.6px;top:384.9px;font-size:9.07px;color:#f5222d;font-weight:400;">未收款</div>
<svg style="left:326.3px;top:383.4px" width="9.5" height="9.5" viewBox="0 0 10 10"><circle cx="5" cy="5" r="4.4" fill="none" stroke="#f5222d" stroke-width="1"/><path d="M5 2.4v3.3" stroke="#f5222d" stroke-width="1.1"/><circle cx="5" cy="7.3" r="0.65" fill="#f5222d"/></svg>
<div class="a" style="left:337.5px;top:384.4px;font-size:9.07px;color:#f5222d;font-weight:400;">未通知发货</div>
<svg style="left:390px;top:383.4px" width="9.5" height="9.5" viewBox="0 0 10 10"><circle cx="5" cy="5" r="4.4" fill="none" stroke="#f5222d" stroke-width="1"/><path d="M5 2.4v3.3" stroke="#f5222d" stroke-width="1.1"/><circle cx="5" cy="7.3" r="0.65" fill="#f5222d"/></svg>
<div class="a" style="left:401.8px;top:384.9px;font-size:9.07px;color:#f5222d;font-weight:400;">未出库</div>
<svg style="left:436.5px;top:383.4px" width="9.5" height="9.5" viewBox="0 0 10 10"><circle cx="5" cy="5" r="4.4" fill="none" stroke="#f5222d" stroke-width="1"/><path d="M5 2.4v3.3" stroke="#f5222d" stroke-width="1.1"/><circle cx="5" cy="7.3" r="0.65" fill="#f5222d"/></svg>
<div class="a" style="left:459.0px;top:385.1px;font-size:10.15px;color:#555;font-weight:400;letter-spacing:-0.3px;">2023-03-15</div>
<div class="a" style="left:533.7px;top:384.1px;font-size:10.04px;color:#555;font-weight:400;letter-spacing:-0.3px;text-decoration:underline;text-underline-offset:0.5px">SO-20230315-001</div>
<div class="a" style="left:684.0px;top:384.9px;font-size:9.13px;color:#444;font-weight:400;">零散客户</div>
<svg style="left:617px;top:383.5px" width="7" height="10" viewBox="0 0 7 10"><rect x="0.5" y="0.5" width="6" height="9" rx="1" fill="none" stroke="#777" stroke-width="0.9"/><path d="M2.5 7.5h2" stroke="#777" stroke-width="0.8"/></svg>
<div class="a" style="left:864.0px;top:384.9px;font-size:9.13px;color:#444;font-weight:400;">珠珠</div>
<div class="b" style="left:1101px;top:232px;width:5px;height:289px;background:linear-gradient(to right,rgba(0,0,0,0),rgba(0,0,0,0.05))"></div>
<div class="th" style="left:1106px;width:143px"></div>
<div class="a" style="left:1169.3px;top:240.2px;font-size:8.84px;color:#333;font-weight:bold;">操作</div>
<div class="b" style="left:1106px;top:256px;width:143px;height:23px;background:#fff"></div>
<div class="b" style="left:1106px;top:279px;width:143px;height:2px;background:#f0f0f0"></div>
<div class="b" style="left:1106px;top:280px;width:143px;height:23px;background:#fff"></div>
<div class="b" style="left:1106px;top:303px;width:143px;height:2px;background:#f0f0f0"></div>
<div class="b" style="left:1106px;top:304px;width:143px;height:23px;background:#fff"></div>
<div class="b" style="left:1106px;top:327px;width:143px;height:2px;background:#f0f0f0"></div>
<div class="b" style="left:1106px;top:328px;width:143px;height:23px;background:#fff"></div>
<div class="b" style="left:1106px;top:351px;width:143px;height:2px;background:#f0f0f0"></div>
<div class="b" style="left:1106px;top:352px;width:143px;height:23px;background:#dce8fc"></div>
<div class="b" style="left:1106px;top:375px;width:143px;height:2px;background:#f0f0f0"></div>
<div class="b" style="left:1106px;top:376px;width:143px;height:23px;background:#fff"></div>
<div class="b" style="left:1106px;top:399px;width:143px;height:2px;background:#f0f0f0"></div>
<div class="b" style="left:1106px;top:400px;width:143px;height:23px;background:#fff"></div>
<div class="b" style="left:1106px;top:423px;width:143px;height:2px;background:#f0f0f0"></div>
<div class="b" style="left:1106px;top:424px;width:143px;height:23px;background:#fff"></div>
<div class="b" style="left:1106px;top:447px;width:143px;height:2px;background:#f0f0f0"></div>
<div class="b" style="left:1106px;top:448px;width:143px;height:23px;background:#fff"></div>
<div class="b" style="left:1106px;top:471px;width:143px;height:2px;background:#f0f0f0"></div>
<div class="b" style="left:1106px;top:472px;width:143px;height:23px;background:#fff"></div>
<div class="b" style="left:1106px;top:495px;width:143px;height:2px;background:#f0f0f0"></div>
<div class="b" style="left:1106px;top:496px;width:143px;height:23px;background:#fff"></div>
<div class="b" style="left:1106px;top:519px;width:143px;height:2px;background:#f0f0f0"></div>
<div class="a" style="left:1123.6px;top:264.8px;font-size:9.2px;color:#aaa;font-weight:400;text-decoration:underline;text-underline-offset:0.5px">收款</div>
<div class="a" style="left:1153.5px;top:265.3px;font-size:9.2px;color:#333;font-weight:400;text-decoration:underline;text-underline-offset:0.5px">查看</div>
<div class="a" style="left:1183.4px;top:264.8px;font-size:9.2px;color:#aaa;font-weight:400;text-decoration:underline;text-underline-offset:0.5px">变更</div>
<div class="a" style="left:1213.3px;top:264.8px;font-size:9.2px;color:#333;font-weight:400;text-decoration:underline;text-underline-offset:0.5px">复制</div>
<div class="b" style="left:1147px;top:264px;width:1px;height:10px;background:#ccc"></div>
<div class="b" style="left:1177px;top:264px;width:1px;height:10px;background:#ccc"></div>
<div class="b" style="left:1207px;top:264px;width:1px;height:10px;background:#ccc"></div>
<div class="a" style="left:1123.6px;top:312.8px;font-size:9.2px;color:#aaa;font-weight:400;text-decoration:underline;text-underline-offset:0.5px">收款</div>
<div class="a" style="left:1153.5px;top:313.3px;font-size:9.2px;color:#333;font-weight:400;text-decoration:underline;text-underline-offset:0.5px">查看</div>
<div class="a" style="left:1183.4px;top:312.8px;font-size:9.2px;color:#333;font-weight:400;text-decoration:underline;text-underline-offset:0.5px">变更</div>
<div class="a" style="left:1213.3px;top:312.8px;font-size:9.2px;color:#333;font-weight:400;text-decoration:underline;text-underline-offset:0.5px">复制</div>
<div class="b" style="left:1147px;top:312px;width:1px;height:10px;background:#ccc"></div>
<div class="b" style="left:1177px;top:312px;width:1px;height:10px;background:#ccc"></div>
<div class="b" style="left:1207px;top:312px;width:1px;height:10px;background:#ccc"></div>
<div class="a" style="left:1123.6px;top:336.8px;font-size:9.2px;color:#333;font-weight:400;text-decoration:underline;text-underline-offset:0.5px">收款</div>
<div class="a" style="left:1153.5px;top:337.3px;font-size:9.2px;color:#333;font-weight:400;text-decoration:underline;text-underline-offset:0.5px">查看</div>
<div class="a" style="left:1183.4px;top:336.8px;font-size:9.2px;color:#333;font-weight:400;text-decoration:underline;text-underline-offset:0.5px">变更</div>
<div class="a" style="left:1213.3px;top:336.8px;font-size:9.2px;color:#333;font-weight:400;text-decoration:underline;text-underline-offset:0.5px">复制</div>
<div class="b" style="left:1147px;top:336px;width:1px;height:10px;background:#ccc"></div>
<div class="b" style="left:1177px;top:336px;width:1px;height:10px;background:#ccc"></div>
<div class="b" style="left:1207px;top:336px;width:1px;height:10px;background:#ccc"></div>
<div class="a" style="left:1123.6px;top:384.8px;font-size:9.2px;color:#333;font-weight:400;text-decoration:underline;text-underline-offset:0.5px">收款</div>
<div class="a" style="left:1153.5px;top:385.3px;font-size:9.2px;color:#333;font-weight:400;text-decoration:underline;text-underline-offset:0.5px">查看</div>
<div class="a" style="left:1183.4px;top:384.8px;font-size:9.2px;color:#333;font-weight:400;text-decoration:underline;text-underline-offset:0.5px">变更</div>
<div class="a" style="left:1213.3px;top:384.8px;font-size:9.2px;color:#333;font-weight:400;text-decoration:underline;text-underline-offset:0.5px">复制</div>
<div class="b" style="left:1147px;top:384px;width:1px;height:10px;background:#ccc"></div>
<div class="b" style="left:1177px;top:384px;width:1px;height:10px;background:#ccc"></div>
<div class="b" style="left:1207px;top:384px;width:1px;height:10px;background:#ccc"></div>
<div class="b" style="left:1243px;top:258px;width:6px;height:138px;border-radius:3px;background:rgba(0,0,0,0.3)"></div>
<div class="b" style="left:143px;top:520px;width:1106px;height:2px;background:#ebebeb"></div>
<div class="b" style="left:143px;top:522px;width:1106px;height:24px;background:#fcefdb"></div>
<div class="b" style="left:223px;top:522px;width:1px;height:35px;background:#ece4d6"></div>
<div class="b" style="left:1105px;top:522px;width:1px;height:35px;background:#fff"></div>
<div class="a" style="left:154.8px;top:530.5px;font-size:9.0px;color:#333;font-weight:400;">合计:</div>
<div class="b" style="left:143px;top:546px;width:80px;height:11px;background:linear-gradient(#fff,#f0f0f0)"></div>
<div class="b" style="left:143px;top:546px;width:1106px;height:1px;background:#e0e0e0"></div>
<div class="b" style="left:143px;top:557px;width:1106px;height:1px;background:#e0e0e0"></div>
<div class="b" style="left:226px;top:549px;width:396px;height:6.5px;border-radius:3.5px;background:#b0b0b0"></div>
<div class="b" style="left:143px;top:590px;width:1106px;height:1px;background:#f0f0f0"></div>
<div class="a" style="left:862.9px;top:569.5px;font-size:9.08px;color:#333;font-weight:400;">每页显示</div>
<div class="b" style="left:905.4px;top:561.7px;width:44.2px;height:23.4px;border:1px solid #e0e0e0;border-radius:2px"></div>
<div class="a" style="left:912.2px;top:570.1px;font-size:10.6px;color:#333;font-weight:400;letter-spacing:-0.4px;">50</div>
<svg style="left:935px;top:570px" width="10.5" height="5.5" viewBox="0 0 11 6"><path d="M0.5 0.5L5.5 5.5 10.5 0.5" fill="none" stroke="#555" stroke-width="1"/></svg>
<svg style="left:971.6px;top:570.8px" width="6.5" height="7.5" viewBox="0 0 7 8"><path d="M0.6 0v8M6.5 0.3L2 4l4.5 3.7" fill="none" stroke="#c0c0c0" stroke-width="1"/></svg>
<svg style="left:992px;top:570px" width="5" height="8.5" viewBox="0 0 5 9"><path d="M4.5 0.3L0.6 4.5l3.9 4.2" fill="none" stroke="#c0c0c0" stroke-width="1"/></svg>
<div class="a" style="left:1008.7px;top:569.8px;font-size:8.9px;color:#333;font-weight:400;">第</div>
<div class="b" style="left:1023.5px;top:561.7px;width:45px;height:23.8px;border:1px solid #e0e0e0;border-radius:2px"></div>
<div class="a" style="left:1031.0px;top:570.0px;font-size:10.6px;color:#333;font-weight:400;">1</div>
<div class="a" style="left:1074.75px;top:569.8px;font-size:8.75px;color:#333;font-weight:400;">页</div>
<svg style="left:1095.75px;top:569.5px" width="5" height="9" viewBox="0 0 5 9"><path d="M0.5 0.3L4.4 4.5 0.5 8.7" fill="none" stroke="#c0c0c0" stroke-width="1"/></svg>
<svg style="left:1114.7px;top:570px" width="7" height="8.5" viewBox="0 0 7 9"><path d="M0.5 0.3L4.4 4.5 0.5 8.7M6.4 0v9" fill="none" stroke="#c0c0c0" stroke-width="1"/></svg>
<div class="a" style="left:1140.8px;top:569.8px;font-size:9.1px;color:#333;font-weight:400;">共1页, 21条记录</div>
</body></html>
